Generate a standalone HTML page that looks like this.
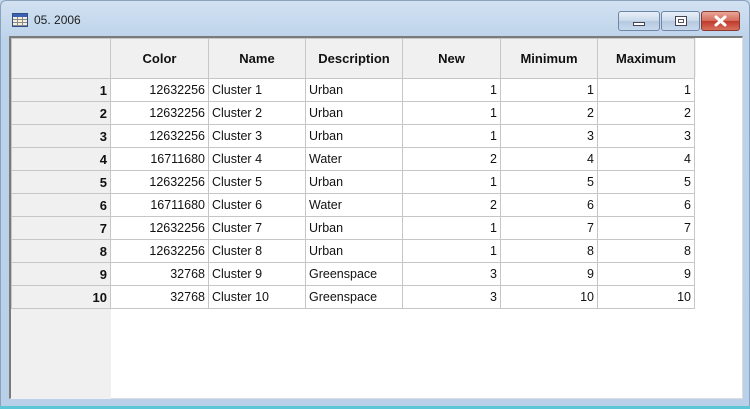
<!DOCTYPE html>
<html><head><style>
*{margin:0;padding:0;box-sizing:border-box}
body{width:750px;height:409px;overflow:hidden;background:#c4d7eb;font-family:"Liberation Sans",sans-serif;position:relative}
.frame{position:absolute;left:0;top:0;width:750px;height:409px;background:linear-gradient(#d2e1f1,#bcd2ea 40px,#bad0e8);border:1px solid #8aa2bd;border-radius:6px 6px 0 0}
.title{position:absolute;left:34px;top:13px;font-size:12px;color:#1e1e1e}
.ico{position:absolute;left:12px;top:13px;width:16px;height:14px;border:1px solid #2d4f8a;background:
linear-gradient(#3a62b0,#3a62b0) 0 0/100% 3px no-repeat,#f6f0dc;}
.ico:after{content:"";position:absolute;left:0;top:3px;right:0;bottom:0;background:
repeating-linear-gradient(90deg,transparent 0 4px,#8a8a8a 4px 5px),repeating-linear-gradient(180deg,transparent 0 2px,#8a8a8a 2px 3px)}
.btn{position:absolute;top:11px;height:20px;border:1px solid #6f86a6;border-radius:3px;background:linear-gradient(#e8f0f8,#c9d8ea 50%,#b5c9e0 51%,#c8d9ec)}
.cont{position:absolute;left:9px;top:36px;width:734px;height:363px;background:#fff;border-top:2px solid #7a7a7a;border-left:2px solid #7a7a7a;border-right:1px solid #dcdcdc;border-bottom:1px solid #dcdcdc}
.rh{position:absolute;left:0;top:0;width:100px;height:361px;background:#f0f0f0}
.hdr{position:absolute;left:0;top:0;width:685px;height:39px;background:#f0f0f0}
table{position:absolute;left:0;top:0;border-collapse:collapse;font-size:12.5px;color:#111}
td,th{border:1px solid #c6c6c6;height:23px;padding:0 3px;white-space:nowrap}
th{height:40px;font-weight:bold;background:#f0f0f0;text-align:center;font-size:13px}
td.n{text-align:right;font-weight:bold;background:#f0f0f0;font-size:13px}
td.r{text-align:right}
</style></head><body>
<div class="frame"></div>
<div class="ico"></div>
<div class="title">05. 2006</div>
<div class="btn" style="left:618px;width:42px"><div style="position:absolute;left:14px;top:10px;width:12px;height:4px;border:1px solid #445;background:#fff"></div></div>
<div class="btn" style="left:661px;width:39px"><div style="position:absolute;left:13px;top:4px;width:12px;height:10px;border:1px solid #445;background:#fff;box-shadow:inset 0 0 0 2px #fff,inset 0 0 0 3px #556"></div></div>
<div class="btn" style="left:701px;width:39px;border-color:#8a3a30;background:linear-gradient(#e9a59a,#d46a58 50%,#c0392b 51%,#d8705e)"><svg width="37" height="18" style="position:absolute;left:0;top:0"><path d="M14 5 L23 13 M23 5 L14 13" stroke="#fff" stroke-width="3" stroke-linecap="round"/></svg></div>
<div class="cont">
<div class="rh"></div><div class="hdr"></div>
<table>
<colgroup><col style="width:99px"><col style="width:98px"><col style="width:97px"><col style="width:97px"><col style="width:98px"><col style="width:97px"><col style="width:97px"></colgroup>
<tr><th></th><th>Color</th><th>Name</th><th>Description</th><th>New</th><th>Minimum</th><th>Maximum</th></tr>
<tr><td class="n">1</td><td class="r">12632256</td><td>Cluster 1</td><td>Urban</td><td class="r">1</td><td class="r">1</td><td class="r">1</td></tr>
<tr><td class="n">2</td><td class="r">12632256</td><td>Cluster 2</td><td>Urban</td><td class="r">1</td><td class="r">2</td><td class="r">2</td></tr>
<tr><td class="n">3</td><td class="r">12632256</td><td>Cluster 3</td><td>Urban</td><td class="r">1</td><td class="r">3</td><td class="r">3</td></tr>
<tr><td class="n">4</td><td class="r">16711680</td><td>Cluster 4</td><td>Water</td><td class="r">2</td><td class="r">4</td><td class="r">4</td></tr>
<tr><td class="n">5</td><td class="r">12632256</td><td>Cluster 5</td><td>Urban</td><td class="r">1</td><td class="r">5</td><td class="r">5</td></tr>
<tr><td class="n">6</td><td class="r">16711680</td><td>Cluster 6</td><td>Water</td><td class="r">2</td><td class="r">6</td><td class="r">6</td></tr>
<tr><td class="n">7</td><td class="r">12632256</td><td>Cluster 7</td><td>Urban</td><td class="r">1</td><td class="r">7</td><td class="r">7</td></tr>
<tr><td class="n">8</td><td class="r">12632256</td><td>Cluster 8</td><td>Urban</td><td class="r">1</td><td class="r">8</td><td class="r">8</td></tr>
<tr><td class="n">9</td><td class="r">32768</td><td>Cluster 9</td><td>Greenspace</td><td class="r">3</td><td class="r">9</td><td class="r">9</td></tr>
<tr><td class="n">10</td><td class="r">32768</td><td>Cluster 10</td><td>Greenspace</td><td class="r">3</td><td class="r">10</td><td class="r">10</td></tr>
</table>
</div>
<div style="position:absolute;left:0;top:406px;width:750px;height:3px;background:#5cc6d6"></div>
</body></html>
